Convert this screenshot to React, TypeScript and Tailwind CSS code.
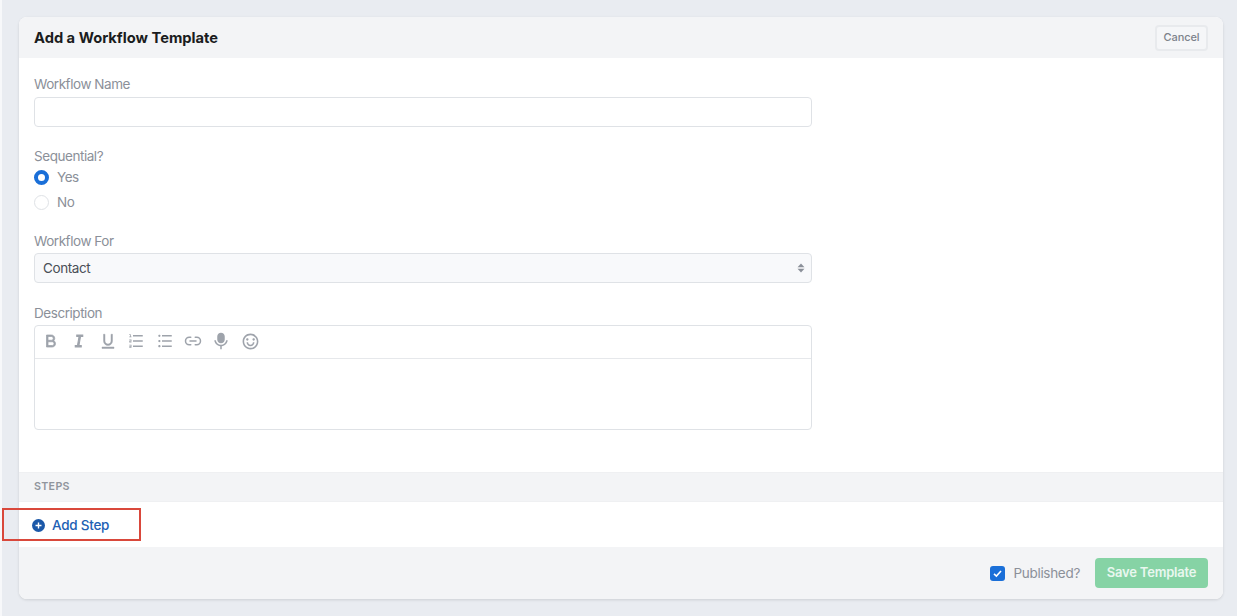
import { RiBold, RiItalic, RiUnderline, RiListOrdered, RiListUnordered, RiMicFill, RiEmotionHappyLine } from "react-icons/ri";
import { Link2 } from "lucide-react";

const labelCls = "block text-[13.5px] leading-[20px] tracking-[-0.45px] text-[#8b9099]";

export default function App() {
  return (
    <div className="relative h-[616px] w-[1237px] overflow-hidden border-l-2 border-[#f7f8fa] bg-[#e9ecf1] pl-[17px] pr-[14px] pt-[17px] font-['Inter','Liberation_Sans',sans-serif]">
      <div className="h-[582px] overflow-hidden rounded-lg bg-white shadow-[0_1px_3px_rgba(0,0,0,0.12)]">
        <div className="flex h-[41px] items-center justify-between bg-[#f3f4f6] px-[15px]">
          <h1 className="pt-[1px] text-[14.7px] font-bold text-[#1a1c20]">Add a Workflow Template</h1>
          <button className="h-[26px] w-[53px] rounded border-2 border-[#e8eaed] bg-[#f5f6f8] text-[11px] font-medium tracking-[-0.1px] text-[#7d828b]">Cancel</button>
        </div>

        <div className="h-[414px] px-[15px] pt-[16px]">
          <div className="w-[778px]">
            <label className={labelCls}>Workflow Name</label>
            <div className="mt-[3px] h-[30px] rounded border border-[#dfe2e6] bg-white" />

            <label className={`${labelCls} mt-[19px]`}>Sequential?</label>
            <div className="mt-[1px] flex h-[20px] items-center gap-[8px]">
              <span className="h-[15px] w-[15px] rounded-full border-[4px] border-[#1a6fd8] bg-white" />
              <span className="text-[13.5px] tracking-[-0.5px] text-[#8b9099]">Yes</span>
            </div>
            <div className="mt-[5px] flex h-[20px] items-center gap-[8px]">
              <span className="h-[15px] w-[15px] rounded-full border border-[#dfe2e6] bg-white" />
              <span className="text-[13.5px] tracking-[-0.5px] text-[#8b9099]">No</span>
            </div>

            <label className={`${labelCls} mt-[19px]`}>Workflow For</label>
            <div className="mt-[2px] flex h-[30px] items-center justify-between rounded border border-[#dfe2e6] bg-[#f8f9fb] pl-[8px] pr-[6px]">
              <span className="text-[13.5px] tracking-[-0.4px] text-[#4a4f57]">Contact</span>
              <svg width="8" height="10" viewBox="0 0 8 10" className="text-[#8b9099]" fill="currentColor">
                <path d="M4 0.5 7.5 4.2H.5z" />
                <path d="M4 9.5 .5 5.8h7z" />
              </svg>
            </div>

            <label className={`${labelCls} mt-[20px]`}>Description</label>
            <div className="mt-[2px] h-[105px] rounded border border-[#dfe2e6] bg-white">
              <div className="flex h-[33px] items-center gap-[10.4px] border-b border-[#e6e8eb] pb-[2px] pl-[7px] text-[#9ea3ab]">
                <RiBold size={18} className="stroke-current stroke-[1px]" />
                <RiItalic size={18} className="stroke-current stroke-[1.4px]" />
                <RiUnderline size={18} className="stroke-current stroke-[0.6px]" />
                <RiListOrdered size={18} />
                <RiListUnordered size={18} />
                <Link2 size={18} strokeWidth={2} />
                <RiMicFill size={18} />
                <RiEmotionHappyLine size={19} />
              </div>
            </div>
          </div>
        </div>

        <div className="flex h-[30px] items-center border-y border-[#eff0f2] bg-[#f3f4f6] px-[15px] text-[10.7px] font-semibold tracking-[0.3px] text-[#90959d]">STEPS</div>

        <div className="flex h-[45px] items-center gap-[7px] bg-white pl-[13px] pt-[1px]">
          <svg width="13" height="13" viewBox="0 0 13 13">
            <circle cx="6.5" cy="6.5" r="6.5" fill="#1b58a8" />
            <path d="M6.5 3.5v6M3.5 6.5h6" stroke="#fff" strokeWidth="1.4" />
          </svg>
          <span className="text-[13.5px] font-medium tracking-[-0.25px] text-[#2160b4]">Add Step</span>
        </div>

        <div className="flex h-[52px] items-center justify-end bg-[#f3f4f6] pr-[15px]">
          <span className="flex h-[15px] w-[15px] items-center justify-center rounded-[3px] bg-[#1a6fd8]">
            <svg width="13" height="13" viewBox="0 0 13 13" fill="none" stroke="#fff" strokeWidth="1.6"><path d="M3 6.8 5.4 9 10 4" /></svg>
          </span>
          <span className="ml-[8px] text-[13.5px] tracking-[-0.3px] text-[#8b9099]">Published?</span>
          <button className="ml-[15px] h-[30px] w-[113px] rounded bg-[#86d3a5] text-[13px] font-semibold tracking-[-0.2px] text-[#e9f7ef]">Save Template</button>
        </div>
      </div>

      <div className="absolute left-[0px] top-[508px] h-[33px] w-[139px] border-2 border-[#d9483b]" />
    </div>
  );
}
